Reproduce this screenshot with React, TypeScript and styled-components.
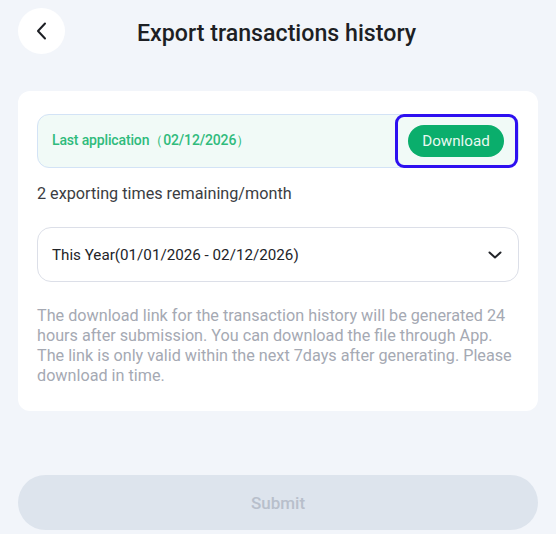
import React from "react";
import styled, { createGlobalStyle } from "styled-components";

const GlobalStyle = createGlobalStyle`
  html, body { margin: 0; padding: 0; background: #f2f5fa; }
  body { font-family: Roboto, "Noto Sans", sans-serif; -webkit-font-smoothing: antialiased; }
  * { box-sizing: border-box; }
`;

const Page = styled.div`
  width: 556px;
  height: 534px;
  background: #f2f5fa;
  display: flex;
  flex-direction: column;
  padding: 8px 18px 4px 18px;
`;

const Header = styled.header`
  display: flex;
  align-items: center;
  gap: 72px;
  height: 46px;
`;

const BackButton = styled.button`
  width: 47px;
  height: 46px;
  border-radius: 50%;
  border: none;
  background: #ffffff;
  display: flex;
  align-items: center;
  justify-content: center;
  padding: 0;
  cursor: pointer;
`;

const Title = styled.h1`
  margin: 0 0 -3px 0;
  font-size: 23.2px;
  font-weight: 500;
  color: #1d1f24;
  letter-spacing: 0;
`;

const Card = styled.section`
  margin-top: 37px;
  background: #ffffff;
  border-radius: 12px;
  padding: 23px 19px 25px 19px;
  display: flex;
  flex-direction: column;
`;

const LastApp = styled.div`
  height: 54px;
  border: 1px solid #d3e3f6;
  background: #f1faf7;
  border-radius: 12px;
  display: flex;
  align-items: center;
  justify-content: space-between;
  padding: 0 14px 0 14px;
`;

const LastText = styled.span`
  font-size: 14px;
  font-weight: 500;
  letter-spacing: -0.15px;
  color: #2fbb7c;
`;

const Highlight = styled.div`
  margin-right: -14px;
  border: 3px solid #2d10f0;
  border-radius: 9px;
  padding: 8px 11px 8px 10px;
  display: flex;
`;

const DownloadButton = styled.button`
  height: 32px;
  width: 96px;
  border: none;
  border-radius: 16px;
  background: #0aae6c;
  color: #e9f8f1;
  font-family: Roboto, sans-serif;
  font-size: 15.2px;
  font-weight: 400;
  padding: 0;
`;

const Remaining = styled.p`
  margin: 16px 0 0 0;
  font-size: 16.2px;
  line-height: 20px;
  color: #3b3d42;
`;

const Select = styled.div`
  margin-top: 23px;
  height: 55px;
  border: 1px solid #dcdfe8;
  border-radius: 14px;
  display: flex;
  align-items: center;
  justify-content: space-between;
  padding: 0 16px 0 14px;
`;

const SelectText = styled.span`
  font-size: 15.2px;
  color: #222429;
`;

const Note = styled.p`
  margin: 24px 0 0 0;
  font-size: 16.2px;
  line-height: 20px;
  color: #a5a9b3;
`;

const Spacer = styled.div`
  flex: 1;
`;

const Submit = styled.button`
  height: 55px;
  width: 100%;
  border: none;
  border-radius: 28px;
  background: #dde4ed;
  color: #b8bfcb;
  font-family: Roboto, sans-serif;
  font-size: 17px;
  font-weight: 500;
`;

export default function App() {
  return (
    <>
      <GlobalStyle />
      <Page>
        <Header>
          <BackButton aria-label="Back">
            <svg width="14" height="18" viewBox="0 0 14 18" fill="none">
              <path d="M10 1.5 L3 9 L10 16.5" stroke="#1d1f24" strokeWidth="2" strokeLinecap="round" strokeLinejoin="round" />
            </svg>
          </BackButton>
          <Title>Export transactions history</Title>
        </Header>
        <Card>
          <LastApp>
            <LastText>Last application（02/12/2026）</LastText>
            <Highlight>
              <DownloadButton>Download</DownloadButton>
            </Highlight>
          </LastApp>
          <Remaining>2 exporting times remaining/month</Remaining>
          <Select>
            <SelectText>This Year(01/01/2026 - 02/12/2026)</SelectText>
            <svg width="14" height="8" viewBox="0 0 14 8" fill="none">
              <path d="M1.5 1.5 L7 6.5 L12.5 1.5" stroke="#222429" strokeWidth="2" strokeLinecap="round" strokeLinejoin="round" />
            </svg>
          </Select>
          <Note>
            The download link for the transaction history will be generated 24 hours after submission. You can download the file through App. The link is only valid within the next 7days after generating. Please download in time.
          </Note>
        </Card>
        <Spacer />
        <Submit>Submit</Submit>
      </Page>
    </>
  );
}
